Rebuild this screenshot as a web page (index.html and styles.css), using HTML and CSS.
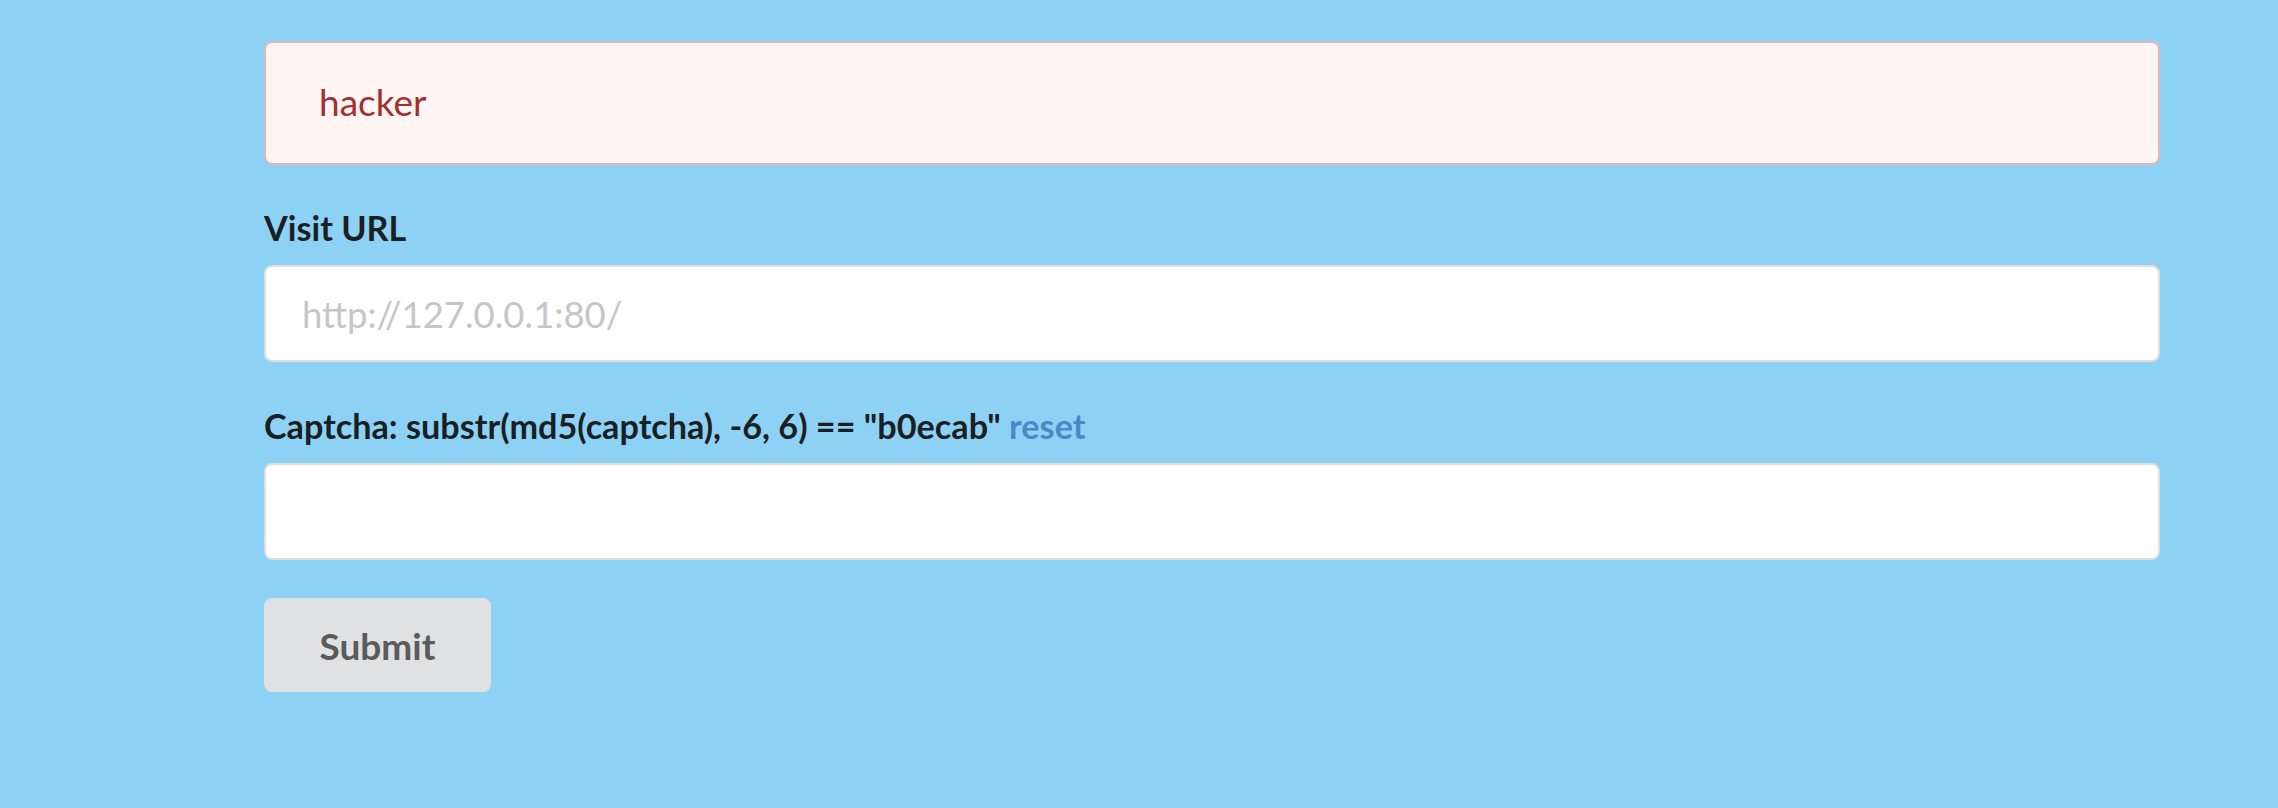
FILE: index.html
```html
<!DOCTYPE html>
<html lang="en">
<head>
<meta charset="utf-8">
<title>Visit URL</title>
<link rel="stylesheet" href="styles.css">
</head>
<body>
<main class="page">
  <div class="alert">hacker</div>
  <form class="form">
    <div class="group">
      <label class="label" for="url">Visit URL</label>
      <input class="input" id="url" type="text" placeholder="http://127.0.0.1:80/">
    </div>
    <div class="group group-last">
      <label class="label" for="captcha">Captcha: substr(md5(captcha), -6, 6) == "b0ecab" <a class="reset" href="#">reset</a></label>
      <input class="input" id="captcha" type="text">
    </div>
    <button class="btn" type="button">Submit</button>
  </form>
</main>
</body>
</html>
```
FILE: styles.css
```css
html, body {
  margin: 0;
  padding: 0;
}
body {
  background: #8dd2f5;
  font-family: Lato, "Open Sans", sans-serif;
  color: #1a1f23;
}
.page {
  padding: 41px 118px 0 264px;
}
.alert {
  box-sizing: border-box;
  height: 124px;
  display: flex;
  align-items: center;
  padding: 0 0 4px 53px;
  background: #fff5f4;
  border: 2px solid #e5b5b5;
  border-radius: 8px;
  color: #a3302f;
  font-size: 37px;
  margin-bottom: 43px;
}
.form {
  display: flex;
  flex-direction: column;
  align-items: flex-start;
}
.group {
  display: flex;
  flex-direction: column;
  align-self: stretch;
  margin-bottom: 44px;
}
.group-last {
  margin-bottom: 38px;
}
.label {
  font-size: 34.2px;
  font-weight: 700;
  line-height: 40px;
  margin-bottom: 17px;
}
.reset {
  color: #4a89c9;
  text-decoration: none;
}
.input {
  box-sizing: border-box;
  height: 97px;
  width: 100%;
  border: 2px solid #dedede;
  border-radius: 8px;
  background: #fff;
  padding: 0 36px;
  font-family: Lato, "Open Sans", sans-serif;
  font-size: 36.5px;
  color: #333;
  outline: none;
}
.input::placeholder {
  color: #c6c6c6;
  font-weight: 400;
}
.btn {
  box-sizing: border-box;
  width: 227px;
  height: 94px;
  border: none;
  border-radius: 8px;
  background: #e0e1e3;
  color: #5b5b5b;
  font-family: Lato, "Open Sans", sans-serif;
  font-size: 37px;
  font-weight: 700;
  padding: 0;
}
```
